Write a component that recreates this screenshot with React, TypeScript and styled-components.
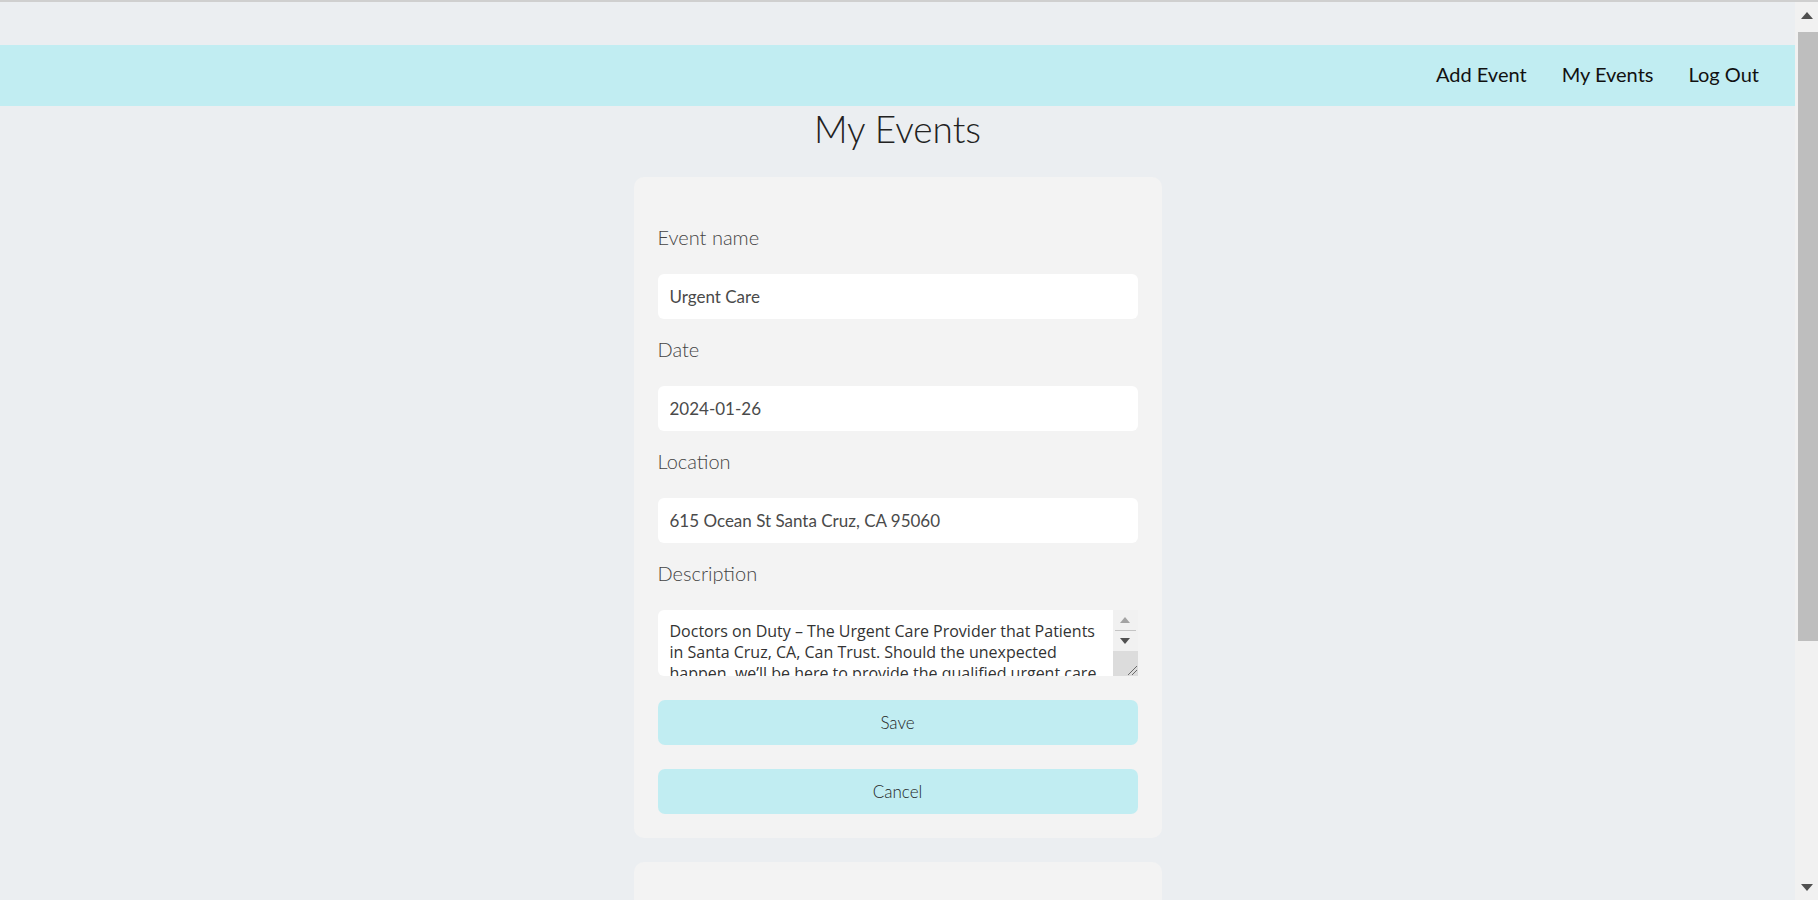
import styled, {createGlobalStyle} from "styled-components";

type EventItem = {
    id: string;
    name: string;
    date: string;
    location: string;
    description: string;
};

const events: EventItem[] = [
    {
        id: "1",
        name: "Urgent Care",
        date: "2024-01-26",
        location: "615 Ocean St Santa Cruz, CA 95060",
        description:
            "Doctors on Duty – The Urgent Care Provider that Patients in Santa Cruz, CA, Can Trust. Should the unexpected happen, we’ll be here to provide the qualified urgent care you need, when you need it. Walk-ins are welcome seven days a week.",
    },
    {
        id: "2",
        name: "Farmers Market",
        date: "2024-02-03",
        location: "Cedar St & Lincoln St Santa Cruz, CA 95060",
        description: "Fresh local produce, flowers and live music every week downtown.",
    },
];

const GlobalStyle = createGlobalStyle`
    html, body {
        margin: 0;
        padding: 0;
        background-color: #ebeef1;
    }

    body {
        border-top: 2px solid #cfcfcf;
        padding-right: 23px;
        font-family: Lato, "Liberation Sans", sans-serif;
    }
`;

const ArrowUp = ({color}: { color: string }) => (
    <svg width="12" height="7" viewBox="0 0 12 7">
        <polygon points="0,7 6,0 12,7" fill={color}/>
    </svg>
);

const ArrowDown = ({color}: { color: string }) => (
    <svg width="12" height="7" viewBox="0 0 12 7">
        <polygon points="0,0 12,0 6,7" fill={color}/>
    </svg>
);

export default function App() {
    const [editing, ...rest] = events;
    return (
        <>
            <GlobalStyle/>
            <Page>
                <NavBar>
                    <NavLink href="#add">Add Event</NavLink>
                    <NavLink href="#events">My Events</NavLink>
                    <NavLink href="#logout">Log Out</NavLink>
                </NavBar>
                <Title>My Events</Title>
                <Card>
                    <Label htmlFor="name">Event name</Label>
                    <InputField id="name" type="text" defaultValue={editing.name}/>
                    <Label htmlFor="date">Date</Label>
                    <InputField id="date" type="text" defaultValue={editing.date}/>
                    <Label htmlFor="location">Location</Label>
                    <InputField id="location" type="text" defaultValue={editing.location}/>
                    <Label htmlFor="description">Description</Label>
                    <TextAreaBox>
                        <TextArea id="description" defaultValue={editing.description}/>
                        <MiniScroll>
                            <MiniButton><ArrowUp color="#a3a3a3"/></MiniButton>
                            <MiniDivider/>
                            <MiniButton><ArrowDown color="#505050"/></MiniButton>
                            <Resizer>
                                <svg width="12" height="12" viewBox="0 0 12 12">
                                    <line x1="2" y1="11" x2="11" y2="2" stroke="#6a6a6a" strokeWidth="1"/>
                                    <line x1="6" y1="11" x2="11" y2="6" stroke="#6a6a6a" strokeWidth="1"/>
                                </svg>
                            </Resizer>
                        </MiniScroll>
                    </TextAreaBox>
                    <Button>Save</Button>
                    <Button>Cancel</Button>
                </Card>
                {rest.map(item => (
                    <Card key={item.id}>
                        <Label as="div">Event name</Label>
                        <Value>{item.name}</Value>
                        <Label as="div">Date</Label>
                        <Value>{item.date}</Value>
                        <Label as="div">Location</Label>
                        <Value>{item.location}</Value>
                        <Button>Edit</Button>
                        <Button>Delete</Button>
                    </Card>
                ))}
            </Page>
            <PageScroll>
                <ScrollButton><ArrowUp color="#505050"/></ScrollButton>
                <ScrollThumb/>
                <ScrollSpacer/>
                <ScrollButton><ArrowDown color="#505050"/></ScrollButton>
            </PageScroll>
        </>
    );
}

const Page = styled.div`
    padding-top: 43px;
    padding-bottom: 1px;
`;

const NavBar = styled.nav`
    height: 61px;
    box-sizing: border-box;
    padding: 0 36px 4px 0;
    background-color: #c1edf2;
    display: flex;
    justify-content: flex-end;
    align-items: center;
    gap: 35px;
`;

const NavLink = styled.a`
    text-decoration: none;
    color: #111;
    font-size: 20px;
    font-weight: 400;
`;

const Title = styled.h1`
    margin: 1px 0 27px;
    text-align: center;
    font-size: 37px;
    line-height: 43px;
    font-weight: 300;
    color: #222;
`;

const Card = styled.div`
    width: 528px;
    box-sizing: border-box;
    margin: 0 auto 24px;
    padding: 48px 24px 24px;
    background-color: #f3f3f3;
    border-radius: 10px;
    display: flex;
    flex-direction: column;
`;

const Label = styled.label`
    display: block;
    font-size: 20px;
    line-height: 24px;
    font-weight: 300;
    color: #444;
    margin: 18px 0 25px;

    &:first-child {
        margin-top: 0;
    }
`;

const InputField = styled.input`
    box-sizing: border-box;
    width: 100%;
    height: 45px;
    margin: 0;
    padding: 0 12px;
    border: none;
    border-radius: 6px;
    background-color: white;
    font-family: inherit;
    font-size: 17px;
    color: #4a4a4a;

    &:focus {
        outline: none;
    }
`;

const TextAreaBox = styled.div`
    display: flex;
    height: 66px;
    background-color: white;
    border-radius: 6px 0 0 6px;
    overflow: hidden;
`;

const TextArea = styled.textarea`
    flex: 1;
    box-sizing: border-box;
    height: 100%;
    margin: 0;
    padding: 11px 12px;
    border: none;
    background-color: transparent;
    font-family: "Open Sans", "Noto Sans", sans-serif;
    font-size: 16px;
    line-height: 21px;
    color: #333;
    overflow: hidden;
    resize: none;

    &:focus {
        outline: none;
    }
`;

const MiniScroll = styled.div`
    width: 25px;
    background-color: #f1f1f1;
    display: flex;
    flex-direction: column;
    align-items: stretch;
`;

const MiniButton = styled.div`
    height: 20px;
    display: flex;
    align-items: center;
    justify-content: center;

    svg {
        width: 10px;
        height: 6px;
    }
`;

const MiniDivider = styled.div`
    height: 1px;
    margin: 0 2px;
    background-color: #c4c4c4;
`;

const Resizer = styled.div`
    flex: 1;
    background-color: #dcdcdc;
    display: flex;
    align-items: flex-end;
    justify-content: flex-end;
`;

const Value = styled.div`
    box-sizing: border-box;
    height: 45px;
    padding: 0 12px;
    display: flex;
    align-items: center;
    background-color: white;
    border-radius: 6px;
    font-size: 17px;
    color: #4a4a4a;
`;

const Button = styled.button`
    height: 45px;
    margin-top: 24px;
    border: none;
    border-radius: 7px;
    background-color: #c1edf2;
    font-family: inherit;
    font-size: 17px;
    font-weight: 300;
    color: #1f1f1f;
    cursor: pointer;

    &:hover {
        background-color: #b2e4ea;
    }
`;

const PageScroll = styled.div`
    position: fixed;
    top: 2px;
    right: 0;
    bottom: 0;
    width: 23px;
    background-color: #f1f1f1;
    display: flex;
    flex-direction: column;
`;

const ScrollButton = styled.div`
    height: 26px;
    display: flex;
    align-items: center;
    justify-content: center;

    svg {
        width: 12px;
        height: 7px;
    }
`;

const ScrollThumb = styled.div`
    height: 609px;
    margin: 4px 0 0 3px;
    background-color: #bebebe;
`;

const ScrollSpacer = styled.div`
    flex: 1;
`;
